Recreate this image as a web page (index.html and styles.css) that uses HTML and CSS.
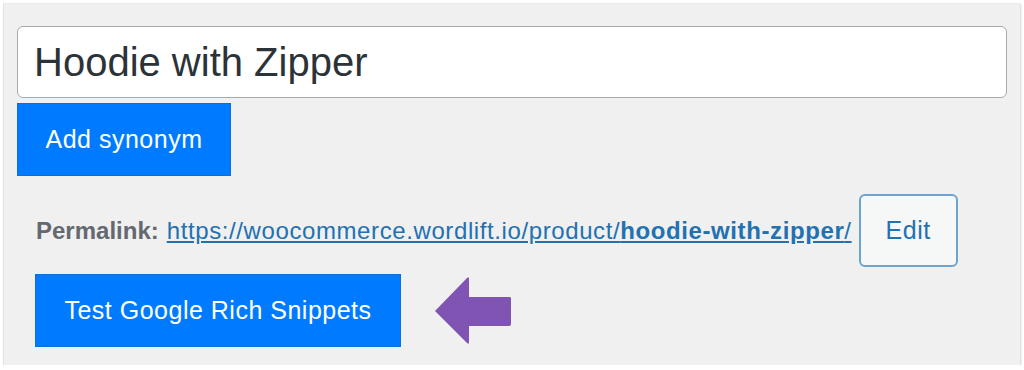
FILE: index.html
```html
<!DOCTYPE html>
<html>
<head>
<meta charset="utf-8">
<link rel="stylesheet" href="styles.css">
</head>
<body>
<div class="panel">
  <div class="title-input">Hoodie with Zipper</div>
  <div class="row-synonym"><button class="btn-primary btn-synonym">Add synonym</button></div>
  <div class="permalink-row">
    <span class="permalink-label">Permalink:</span>
    <a class="permalink-url" href="#">https://woocommerce.wordlift.io/product/<strong>hoodie-with-zipper</strong>/</a>
    <button class="btn-edit">Edit</button>
  </div>
  <div class="test-row">
    <button class="btn-primary btn-test">Test Google Rich Snippets</button>
    <svg class="arrow" width="80" height="70" viewBox="0 0 80 70">
      <path d="M2 35 L34 2 Q36 0 36 3 L36 21 L77 21 Q78 21 78 23 L78 48 Q78 50 76 50 L36 50 L36 66 Q36 69 34 67 Z" fill="#7f54b3"/>
    </svg>
  </div>
</div>
</body>
</html>
```
FILE: styles.css
```css
html, body {
  margin: 0;
  padding: 0;
  background: #ffffff;
}
body {
  padding: 3px 4px 0 3px;
  font-family: "Liberation Sans", Arial, sans-serif;
}
.panel {
  background: #f0f0f0;
  border-left: 1px solid #e2e2e2;
  border-top: 1px solid #ececec;
  box-shadow: 1px 1px 2px rgba(0,0,0,0.18);
  padding: 22px 13px 18px 13px;
}
.title-input {
  height: 70px;
  box-sizing: content-box;
  background: #ffffff;
  border: 1px solid #a7aaad;
  border-radius: 6px;
  font-size: 40px;
  line-height: 70px;
  color: #2c3338;
  padding: 0 16px;
}
.row-synonym {
  margin-top: 5px;
}
.btn-primary {
  background: #007bff;
  color: #ffffff;
  border: 1px solid #0a6fd9;
  font-family: "Liberation Sans", Arial, sans-serif;
  font-size: 25px;
  height: 73px;
  padding: 0;
  display: inline-flex;
  align-items: center;
  justify-content: center;
  letter-spacing: 0.5px;
}
.btn-synonym {
  width: 214px;
}
.permalink-row {
  margin-top: 18px;
  display: flex;
  align-items: center;
  padding-left: 19px;
}
.permalink-label {
  font-weight: bold;
  color: #646970;
  font-size: 24px;
  margin-right: 8px;
}
.permalink-url {
  color: #2271b1;
  font-size: 24px;
  letter-spacing: 0.6px;
  text-decoration: underline;
  text-underline-offset: 2px;
}
.btn-edit {
  margin-left: 7px;
  width: 99px;
  height: 73px;
  background: #f6f7f7;
  border: 2px solid #6ea3cf;
  border-radius: 6px;
  color: #2271b1;
  font-family: "Liberation Sans", Arial, sans-serif;
  font-size: 25px;
  letter-spacing: 0.5px;
}
.test-row {
  margin-top: 7px;
  display: flex;
  align-items: center;
  padding-left: 18px;
}
.btn-test {
  width: 366px;
}
.arrow {
  margin-left: 32px;
}
```
